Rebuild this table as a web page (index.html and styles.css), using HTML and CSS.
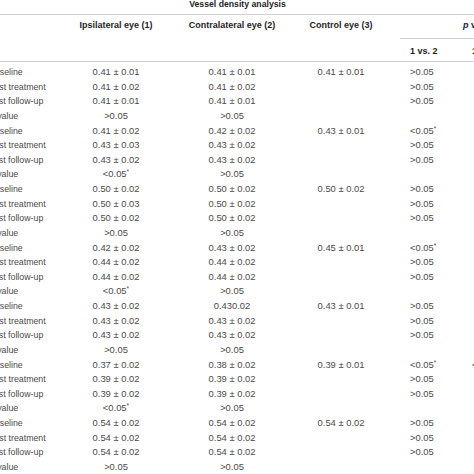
FILE: index.html
```html
<!DOCTYPE html>
<html>
<head>
<meta charset="utf-8">
<link rel="stylesheet" href="styles.css">
</head>
<body>
<table class="vd">
  <colgroup>
    <col class="c-label">
    <col class="c-eye">
    <col class="c-eye">
    <col class="c-ctrl">
    <col class="c-p1">
    <col class="c-p2">
  </colgroup>
  <thead>
    <tr class="r-title">
      <th class="h-blank"></th>
      <th class="h-title" colspan="3">Vessel density analysis</th>
      <th class="h-blank" colspan="2"></th>
    </tr>
    <tr class="r-head">
      <th class="h-blank h-span" rowspan="2"></th>
      <th class="h-col h-span" rowspan="2">Ipsilateral eye (1)</th>
      <th class="h-col h-span" rowspan="2">Contralateral eye (2)</th>
      <th class="h-col h-ctrl h-span" rowspan="2">Control eye (3)</th>
      <th class="h-p" colspan="2"><i>p</i> value</th>
    </tr>
    <tr class="r-sub">
      <th class="h-sub">1 vs. 2</th>
      <th class="h-sub">1 vs. 3</th>
    </tr>
  </thead>
  <tbody>
    <tr class="first"><td class="lab">Baseline</td><td>0.41 ± 0.01</td><td>0.41 ± 0.01</td><td class="ctrl">0.41 ± 0.01</td><td class="pv">&gt;0.05</td><td class="pv"></td></tr>
    <tr><td class="lab">First treatment</td><td>0.41 ± 0.02</td><td>0.41 ± 0.02</td><td class="ctrl"></td><td class="pv">&gt;0.05</td><td class="pv"></td></tr>
    <tr><td class="lab">Last follow-up</td><td>0.41 ± 0.01</td><td>0.41 ± 0.01</td><td class="ctrl"></td><td class="pv">&gt;0.05</td><td class="pv"></td></tr>
    <tr><td class="lab">P value</td><td>&gt;0.05</td><td>&gt;0.05</td><td class="ctrl"></td><td class="pv"></td><td class="pv"></td></tr>

    <tr><td class="lab">Baseline</td><td>0.41 ± 0.02</td><td>0.42 ± 0.02</td><td class="ctrl">0.43 ± 0.01</td><td class="pv">&lt;0.05<span class="sup">*</span></td><td class="pv"></td></tr>
    <tr><td class="lab">First treatment</td><td>0.43 ± 0.03</td><td>0.43 ± 0.02</td><td class="ctrl"></td><td class="pv">&gt;0.05</td><td class="pv"></td></tr>
    <tr><td class="lab">Last follow-up</td><td>0.43 ± 0.02</td><td>0.43 ± 0.02</td><td class="ctrl"></td><td class="pv">&gt;0.05</td><td class="pv"></td></tr>
    <tr><td class="lab">P value</td><td>&lt;0.05<span class="sup">*</span></td><td>&gt;0.05</td><td class="ctrl"></td><td class="pv"></td><td class="pv"></td></tr>

    <tr><td class="lab">Baseline</td><td>0.50 ± 0.02</td><td>0.50 ± 0.02</td><td class="ctrl">0.50 ± 0.02</td><td class="pv">&gt;0.05</td><td class="pv"></td></tr>
    <tr><td class="lab">First treatment</td><td>0.50 ± 0.03</td><td>0.50 ± 0.02</td><td class="ctrl"></td><td class="pv">&gt;0.05</td><td class="pv"></td></tr>
    <tr><td class="lab">Last follow-up</td><td>0.50 ± 0.02</td><td>0.50 ± 0.02</td><td class="ctrl"></td><td class="pv">&gt;0.05</td><td class="pv"></td></tr>
    <tr><td class="lab">P value</td><td>&gt;0.05</td><td>&gt;0.05</td><td class="ctrl"></td><td class="pv"></td><td class="pv"></td></tr>

    <tr><td class="lab">Baseline</td><td>0.42 ± 0.02</td><td>0.43 ± 0.02</td><td class="ctrl">0.45 ± 0.01</td><td class="pv">&lt;0.05<span class="sup">*</span></td><td class="pv"></td></tr>
    <tr><td class="lab">First treatment</td><td>0.44 ± 0.02</td><td>0.44 ± 0.02</td><td class="ctrl"></td><td class="pv">&gt;0.05</td><td class="pv"></td></tr>
    <tr><td class="lab">Last follow-up</td><td>0.44 ± 0.02</td><td>0.44 ± 0.02</td><td class="ctrl"></td><td class="pv">&gt;0.05</td><td class="pv"></td></tr>
    <tr><td class="lab">P value</td><td>&lt;0.05<span class="sup">*</span></td><td>&gt;0.05</td><td class="ctrl"></td><td class="pv"></td><td class="pv"></td></tr>

    <tr><td class="lab">Baseline</td><td>0.43 ± 0.02</td><td>0.430.02</td><td class="ctrl">0.43 ± 0.01</td><td class="pv">&gt;0.05</td><td class="pv"></td></tr>
    <tr><td class="lab">First treatment</td><td>0.43 ± 0.02</td><td>0.43 ± 0.02</td><td class="ctrl"></td><td class="pv">&gt;0.05</td><td class="pv"></td></tr>
    <tr><td class="lab">Last follow-up</td><td>0.43 ± 0.02</td><td>0.43 ± 0.02</td><td class="ctrl"></td><td class="pv">&gt;0.05</td><td class="pv"></td></tr>
    <tr><td class="lab">P value</td><td>&gt;0.05</td><td>&gt;0.05</td><td class="ctrl"></td><td class="pv"></td><td class="pv"></td></tr>

    <tr><td class="lab">Baseline</td><td>0.37 ± 0.02</td><td>0.38 ± 0.02</td><td class="ctrl">0.39 ± 0.01</td><td class="pv">&lt;0.05<span class="sup">*</span></td><td class="pv">&lt;0.05</td></tr>
    <tr><td class="lab">First treatment</td><td>0.39 ± 0.02</td><td>0.39 ± 0.02</td><td class="ctrl"></td><td class="pv">&gt;0.05</td><td class="pv"></td></tr>
    <tr><td class="lab">Last follow-up</td><td>0.39 ± 0.02</td><td>0.39 ± 0.02</td><td class="ctrl"></td><td class="pv">&gt;0.05</td><td class="pv"></td></tr>
    <tr><td class="lab">P value</td><td>&lt;0.05<span class="sup">*</span></td><td>&gt;0.05</td><td class="ctrl"></td><td class="pv"></td><td class="pv"></td></tr>

    <tr><td class="lab">Baseline</td><td>0.54 ± 0.02</td><td>0.54 ± 0.02</td><td class="ctrl">0.54 ± 0.02</td><td class="pv">&gt;0.05</td><td class="pv"></td></tr>
    <tr><td class="lab">First treatment</td><td>0.54 ± 0.02</td><td>0.54 ± 0.02</td><td class="ctrl"></td><td class="pv">&gt;0.05</td><td class="pv"></td></tr>
    <tr><td class="lab">Last follow-up</td><td>0.54 ± 0.02</td><td>0.54 ± 0.02</td><td class="ctrl"></td><td class="pv">&gt;0.05</td><td class="pv"></td></tr>
    <tr><td class="lab">P value</td><td>&gt;0.05</td><td>&gt;0.05</td><td class="ctrl"></td><td class="pv"></td><td class="pv"></td></tr>
  </tbody>
</table>
</body>
</html>
```
FILE: styles.css
```css
html, body {
  margin: 0;
  padding: 0;
  background: #ffffff;
  overflow: hidden;
}
body {
  font-family: "Liberation Sans", Arial, Helvetica, sans-serif;
  color: #4a4a4a;
}
.vd {
  border-collapse: separate;
  border-spacing: 0;
  table-layout: fixed;
  width: 553px;
  margin-left: -11px;
  margin-top: -1.5px;
}
.c-label { width: 69px; }
.c-eye { width: 116px; }
.c-ctrl { width: 110px; }
.c-p1 { width: 62px; }
.c-p2 { width: 80px; }

.vd th {
  font-weight: bold;
  color: #1e1e1e;
  font-size: 9px;
  line-height: 11px;
  padding: 0;
  vertical-align: top;
  white-space: nowrap;
  overflow: hidden;
}
.vd .r-title th {
  padding-bottom: 4.5px;
  border-bottom: 1px solid #cfcfcf;
}
.vd th.h-title {
  font-size: 8.7px;
  text-align: center;
  padding-left: 17px;
}
.vd th.h-col {
  text-align: center;
  padding-top: 5px;
}
.vd th.h-ctrl {
  padding-right: 8px;
}
.vd th.h-span {
  border-bottom: 1px solid #cfcfcf;
}
.vd th.h-p {
  text-align: left;
  padding: 5px 0 7px 63px;
  border-bottom: 1px solid #cfcfcf;
}
.vd th.h-sub {
  text-align: left;
  padding: 7px 0 4px 10px;
  border-bottom: 1px solid #cfcfcf;
}

.vd td {
  font-size: 9.4px;
  line-height: 14.63px;
  padding: 0;
  text-align: center;
  white-space: nowrap;
  overflow: hidden;
}
.vd tr.first td {
  padding-top: 3px;
}
.vd td.lab {
  text-align: left;
  font-size: 8.8px;
}
.vd td.ctrl {
  padding-right: 8px;
}
.vd td.pv {
  text-align: left;
  padding-left: 10px;
}
.vd tr.first td.pv {
  padding-left: 10px;
}
.sup {
  font-size: 6.5px;
  line-height: 0;
  vertical-align: 3px;
}
```
